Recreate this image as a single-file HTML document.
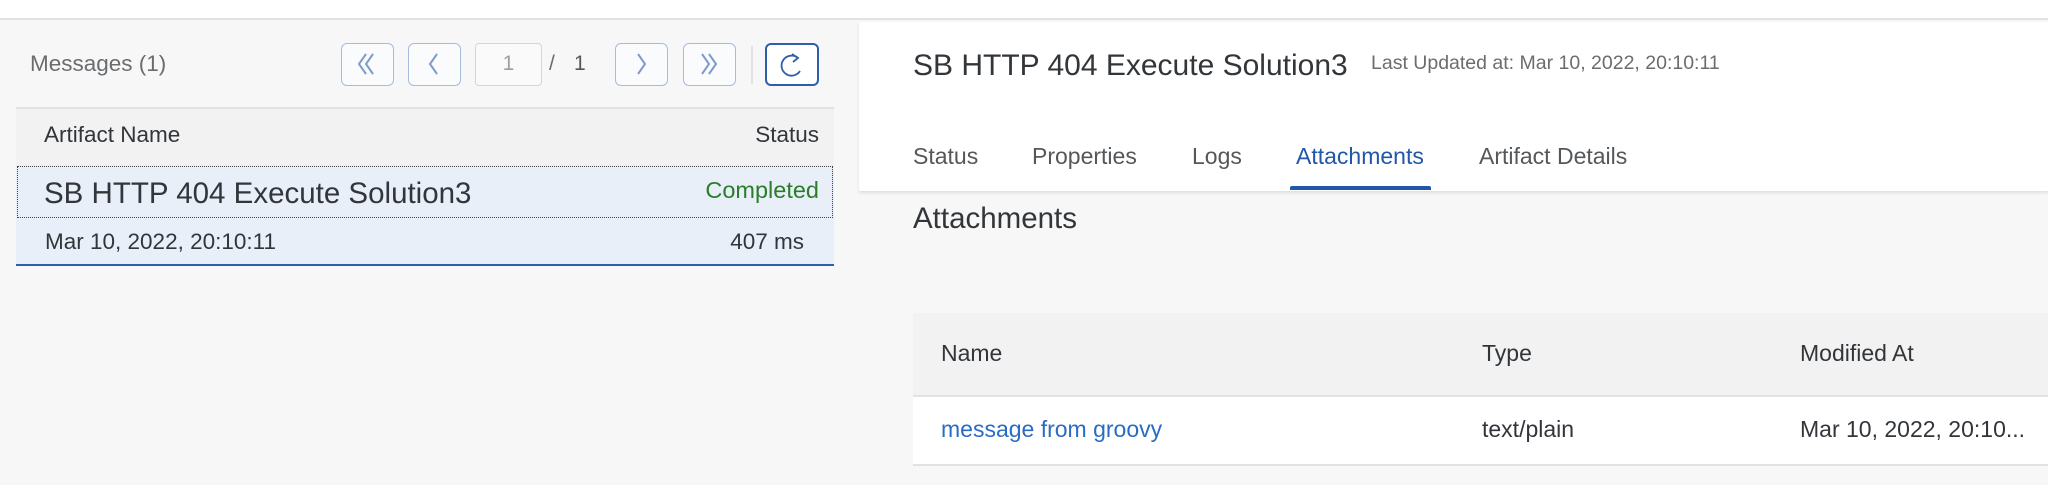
<!DOCTYPE html>
<html><head><meta charset="utf-8"><style>
*{margin:0;padding:0;box-sizing:border-box}
body{width:2048px;height:485px;overflow:hidden;background:#f7f7f7;font-family:"Liberation Sans",sans-serif;color:#32363a;position:relative}
.a{position:absolute;white-space:nowrap}
.r{position:absolute;white-space:nowrap;text-align:right}
.btn{position:absolute;top:43px;height:43px;border:1.5px solid #a6bcdb;border-radius:6px;background:#fafbfd}
</style></head><body>
<div class="a" style="left:0;top:0;width:2048px;height:20px;background:#fff;border-bottom:2px solid #e2e2e2"></div>
<!-- left -->
<div class="a" style="left:30px;top:51px;font-size:22.5px;color:#6a6d70">Messages (1)</div>
<div class="btn" style="left:341px;width:53px"><svg width="50" height="40" viewBox="0 0 50 40"><path d="M24 10l-7 10 7 10M31 10l-7 10 7 10" stroke="#7d9ccb" stroke-width="2" fill="none"/></svg></div>
<div class="btn" style="left:408px;width:53px"><svg width="50" height="40" viewBox="0 0 50 40"><path d="M28 10l-7 10 7 10" stroke="#7d9ccb" stroke-width="2" fill="none"/></svg></div>
<div class="a" style="left:475px;top:43px;width:67px;height:43px;border:1.5px solid #d5d5d5;border-radius:4px;background:#fafafa;font-size:21px;color:#a0a0a0;text-align:center;line-height:40px">1</div>
<div class="a" style="left:549px;top:52px;font-size:21px;color:#6a6d70">/</div>
<div class="a" style="left:574px;top:52px;font-size:21px;color:#55585b">1</div>
<div class="btn" style="left:615px;width:53px"><svg width="50" height="40" viewBox="0 0 50 40"><path d="M22 10l7 10-7 10" stroke="#7d9ccb" stroke-width="2" fill="none"/></svg></div>
<div class="btn" style="left:683px;width:53px"><svg width="50" height="40" viewBox="0 0 50 40"><path d="M18 10l7 10-7 10M25 10l7 10-7 10" stroke="#7d9ccb" stroke-width="2" fill="none"/></svg></div>
<div class="a" style="left:751px;top:46px;width:2px;height:38px;background:#e2e2e2"></div>
<div class="btn" style="left:765px;width:54px;border:2px solid #2f5fa8;background:#fff"><svg width="50" height="40" viewBox="0 0 50 40"><path d="M31 13A10 10 0 1 0 33 26" stroke="#2f5fa8" stroke-width="1.8" fill="none"/><path d="M25 9l6 4-5 4" stroke="#2f5fa8" stroke-width="1.8" fill="none"/></svg></div>
<div class="a" style="left:16px;top:107px;width:818px;height:58px;background:#f2f2f2;border-top:2px solid #e2e2e2"></div>
<div class="a" style="left:44px;top:122px;font-size:22.5px">Artifact Name</div>
<div class="r" style="left:600px;width:219px;top:122px;font-size:22.5px">Status</div>
<div class="a" style="left:16px;top:165px;width:818px;height:101px;background:#e8eff8;border-bottom:2px solid #2f5fa8"></div>
<div class="a" style="left:17px;top:166px;width:816px;height:52px;border:1.5px dotted #444"></div>
<div class="a" style="left:44px;top:177px;font-size:29.5px">SB HTTP 404 Execute Solution3</div>
<div class="r" style="left:600px;width:219px;top:177px;font-size:23.5px;color:#2b7d2b">Completed</div>
<div class="a" style="left:45px;top:229px;font-size:22.5px">Mar 10, 2022, 20:10:11</div>
<div class="r" style="left:600px;width:204px;top:229px;font-size:22.5px">407 ms</div>
<!-- right -->
<div class="a" style="left:859px;top:22px;width:1189px;height:169px;background:#fff;box-shadow:0 2px 3px rgba(0,0,0,.1)"></div>
<div class="a" style="left:913px;top:49px;font-size:30px">SB HTTP 404 Execute Solution3</div>
<div class="a" style="left:1371px;top:52px;font-size:19.5px;color:#6a6d70">Last Updated at: Mar 10, 2022, 20:10:11</div>
<div class="a" style="left:913px;top:143px;font-size:23px;color:#55585b">Status</div>
<div class="a" style="left:1032px;top:143px;font-size:23px;color:#55585b">Properties</div>
<div class="a" style="left:1192px;top:143px;font-size:23px;color:#55585b">Logs</div>
<div class="a" style="left:1296px;top:143px;font-size:23px;color:#2057a8">Attachments</div>
<div class="a" style="left:1290px;top:186px;width:141px;height:4px;background:#2057a8;border-radius:2px 2px 0 0"></div>
<div class="a" style="left:1479px;top:143px;font-size:23px;color:#55585b">Artifact Details</div>
<div class="a" style="left:913px;top:202px;font-size:29.5px">Attachments</div>
<div class="a" style="left:913px;top:313px;width:1135px;height:84px;background:#f2f2f2;border-bottom:2px solid #e2e2e2"></div>
<div class="a" style="left:913px;top:397px;width:1135px;height:69px;background:#fff;border-bottom:2px solid #e2e2e2"></div>
<div class="a" style="left:941px;top:340px;font-size:23px">Name</div>
<div class="a" style="left:1482px;top:340px;font-size:23px">Type</div>
<div class="a" style="left:1800px;top:340px;font-size:23px">Modified At</div>
<div class="a" style="left:941px;top:416px;font-size:23px;color:#2a6cc4">message from groovy</div>
<div class="a" style="left:1482px;top:416px;font-size:23px">text/plain</div>
<div class="a" style="left:1800px;top:416px;font-size:23px">Mar 10, 2022, 20:10...</div>
</body></html>
